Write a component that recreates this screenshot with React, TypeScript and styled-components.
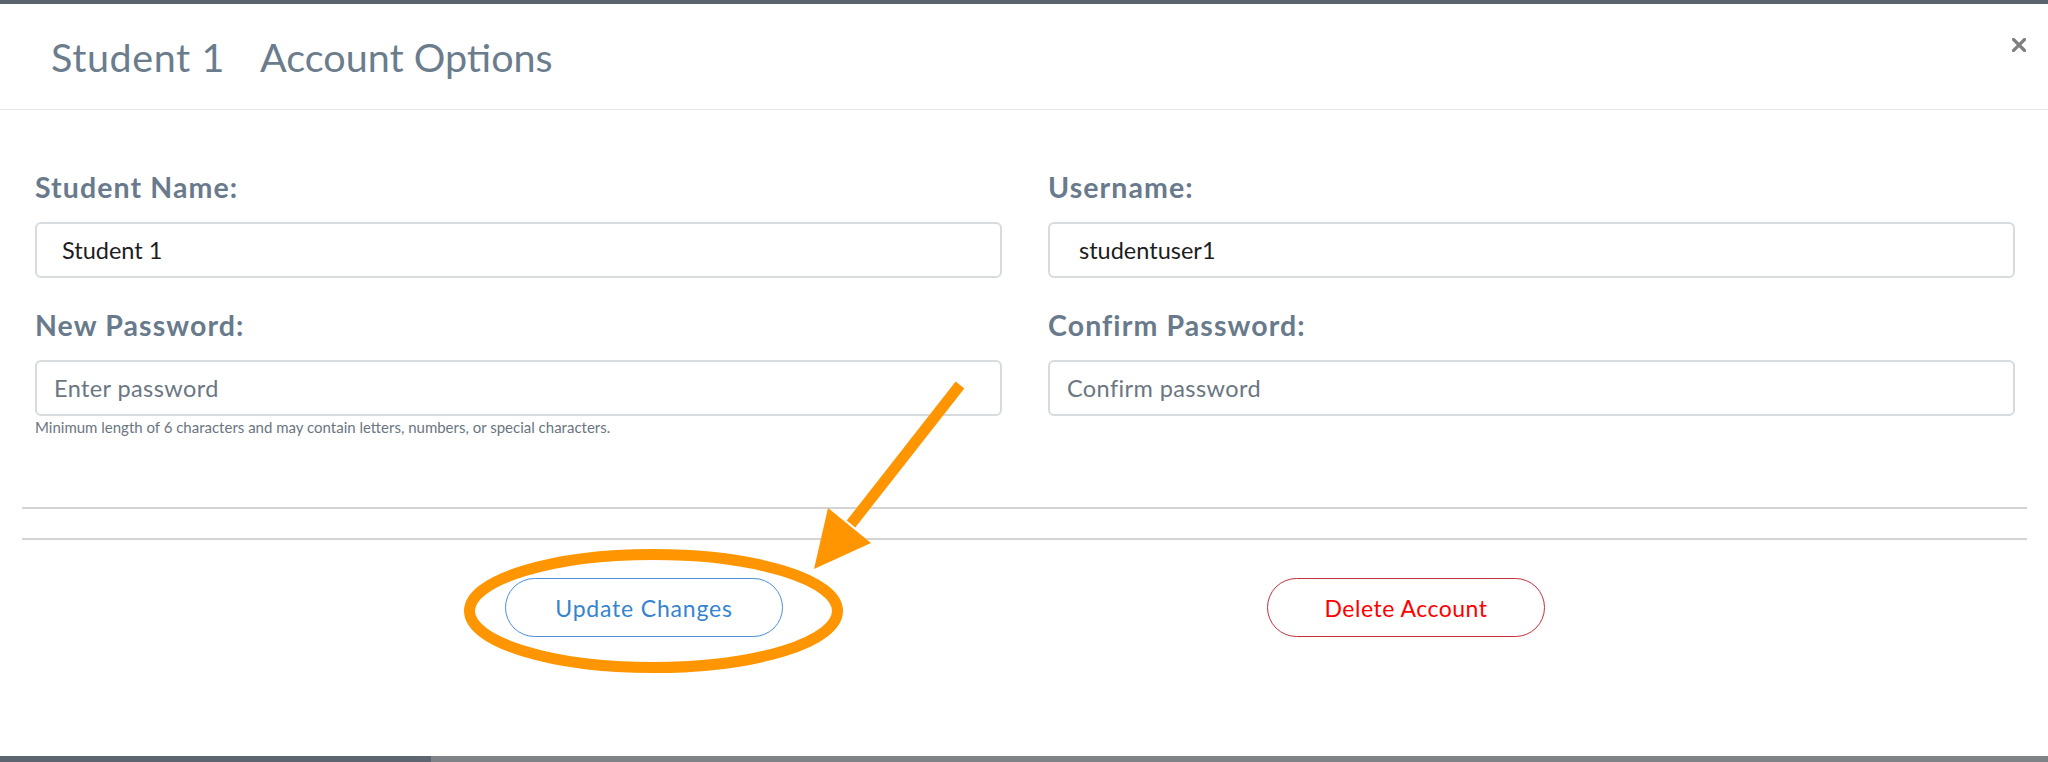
import React from "react";
import styled, { createGlobalStyle } from "styled-components";

const Global = createGlobalStyle`
  html, body { margin: 0; padding: 0; }
  body { font-family: Lato, "Open Sans", Arial, sans-serif; background: #7e8186; }
  * { box-sizing: border-box; }
`;

const Backdrop = styled.div`
  position: relative;
  width: 2048px;
  height: 762px;
  display: flex;
  flex-direction: column;
  overflow: hidden;
  background: #7e8186;
`;

const TopStrip = styled.div`
  height: 4px;
  background: #59626e;
  flex: none;
`;

const BottomStrip = styled.div`
  height: 6px;
  flex: none;
  display: grid;
  grid-template-columns: 431px 1fr;
`;

const StripPart = styled.div<{ $tone: string }>`
  background: ${(p) => p.$tone};
`;

const Modal = styled.div`
  flex: 1;
  background: #ffffff;
  display: flex;
  flex-direction: column;
`;

const Header = styled.div`
  height: 106px;
  flex: none;
  display: flex;
  align-items: center;
  justify-content: space-between;
  padding: 0 22px 0 51px;
  border-bottom: 1px solid #e3e7eb;
`;

const Title = styled.h1`
  margin: 0;
  font-family: Lato, "Open Sans", Arial, sans-serif;
  font-weight: 400;
  font-size: 39.5px;
  line-height: 1.2;
  color: #6b7c8d;
  display: flex;
  gap: 35px;
`;

const TitlePart = styled.span<{ $spacing?: number }>`
  letter-spacing: ${(p) => p.$spacing ?? 0}px;
`;

const CloseButton = styled.button`
  align-self: flex-start;
  margin-top: 34px;
  width: 14px;
  height: 14px;
  padding: 0;
  border: none;
  background: none;
  display: flex;
  cursor: pointer;
`;

const Fields = styled.div`
  display: grid;
  grid-template-columns: 1fr 1fr;
  column-gap: 46px;
  row-gap: 30px;
  padding: 60px 33px 0 35px;
  height: 397px;
  align-content: start;
`;

const Field = styled.div`
  display: flex;
  flex-direction: column;
`;

const Label = styled.label`
  font-family: Lato, "Open Sans", Arial, sans-serif;
  font-weight: 700;
  font-size: 28.5px;
  letter-spacing: 1.1px;
  line-height: 34px;
  color: #687a8b;
  margin-bottom: 18px;
`;

const Input = styled.input<{ $indent?: number }>`
  height: 56px;
  width: 100%;
  border: 2px solid #d6dbe0;
  border-radius: 6px;
  padding: 0 0 0 ${(p) => p.$indent ?? 17}px;
  font-family: Lato, "Open Sans", Arial, sans-serif;
  font-size: 23.5px;
  color: #1d1d1d;
  background: #fff;
  outline: none;
  &::placeholder {
    color: #6b7682;
    letter-spacing: 0.4px;
    opacity: 1;
  }
`;

const Hint = styled.div`
  margin-top: 2px;
  font-family: Lato, "Open Sans", Arial, sans-serif;
  font-size: 15px;
  line-height: 19px;
  color: #6b7682;
`;

const Divider = styled.hr<{ $gap: number }>`
  margin: ${(p) => p.$gap}px 21px 0 22px;
  border: none;
  height: 2px;
  background: #d4d4d4;
`;

const Actions = styled.div`
  display: flex;
  justify-content: center;
  gap: 484px;
  margin-top: 38px;
  padding-left: 2px;
`;

const PillButton = styled.button<{ $tone: "blue" | "red" }>`
  width: 278px;
  height: 59px;
  border-radius: 30px;
  background: #fff;
  font-family: Lato, "Open Sans", Arial, sans-serif;
  font-size: 23px;
  letter-spacing: ${(p) => (p.$tone === "blue" ? "0.8px" : "0.5px")};
  cursor: pointer;
  border: 1.5px solid ${(p) => (p.$tone === "blue" ? "#4a8fd6" : "#c2303a")};
  color: ${(p) => (p.$tone === "blue" ? "#3584cf" : "#ff0000")};
`;

const Annotation = styled.svg`
  position: absolute;
  left: 0;
  top: 0;
  pointer-events: none;
`;

export default function App() {
  return (
    <>
      <Global />
      <Backdrop>
        <TopStrip />
        <Modal>
          <Header>
            <Title>
              <TitlePart $spacing={0.6}>Student 1</TitlePart>
              <TitlePart>Account Options</TitlePart>
            </Title>
            <CloseButton aria-label="Close">
              <svg width="14" height="14" viewBox="0 0 14 14">
                <path d="M1.5 1.5 L12.5 12.5 M12.5 1.5 L1.5 12.5" stroke="#7f7f7f" strokeWidth="3.2" strokeLinecap="square" />
              </svg>
            </CloseButton>
          </Header>
          <Fields>
            <Field>
              <Label>Student Name:</Label>
              <Input $indent={25} readOnly value="Student 1" />
            </Field>
            <Field>
              <Label>Username:</Label>
              <Input $indent={29} readOnly value="studentuser1" />
            </Field>
            <Field>
              <Label>New Password:</Label>
              <Input type="password" placeholder="Enter password" />
              <Hint>Minimum length of 6 characters and may contain letters, numbers, or special characters.</Hint>
            </Field>
            <Field>
              <Label>Confirm Password:</Label>
              <Input type="password" placeholder="Confirm password" />
            </Field>
          </Fields>
          <Divider $gap={0} />
          <Divider $gap={29} />
          <Actions>
            <PillButton $tone="blue">Update Changes</PillButton>
            <PillButton $tone="red">Delete Account</PillButton>
          </Actions>
        </Modal>
        <BottomStrip>
          <StripPart $tone="#5d6570" />
          <StripPart $tone="#7f8287" />
        </BottomStrip>
        <Annotation width="2048" height="762" viewBox="0 0 2048 762">
          <ellipse cx="653.5" cy="611" rx="184" ry="56.5" fill="none" stroke="#ff9500" strokeWidth="11" />
          <line x1="960" y1="385" x2="851" y2="524" stroke="#ff9500" strokeWidth="11" />
          <polygon points="814,569 828,508 871,543" fill="#ff9500" />
        </Annotation>
      </Backdrop>
    </>
  );
}
